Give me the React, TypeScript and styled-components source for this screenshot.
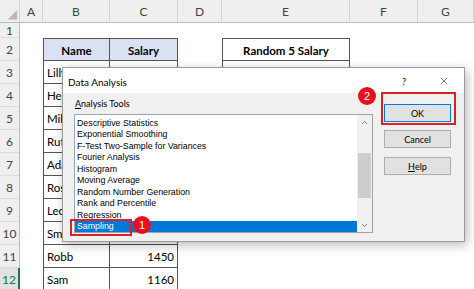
import React from 'react';
import styled, { createGlobalStyle } from 'styled-components';
import { X, ChevronUp, ChevronDown } from 'lucide-react';

const GlobalStyle = createGlobalStyle`
  html, body { margin: 0; padding: 0; background: #fff; overflow: hidden; }
  body { font-family: Lato, "Liberation Sans", sans-serif; }
`;

const COLS = ['A', 'B', 'C', 'D', 'E', 'F', 'G'];

interface SheetRow {
  n: number;
  name?: string;
  salary?: string;
  head?: boolean;
  eText?: string;
  eBox?: boolean;
}

const rows: SheetRow[] = [
  { n: 1 },
  { n: 2, name: 'Name', salary: 'Salary', head: true, eText: 'Random 5 Salary', eBox: true },
  { n: 3, name: 'Lilly', salary: '1200', eBox: true },
  { n: 4, name: 'Henry', salary: '1350', eBox: true },
  { n: 5, name: 'Mike', salary: '1100', eBox: true },
  { n: 6, name: 'Ruth', salary: '1500', eBox: true },
  { n: 7, name: 'Adam', salary: '1250', eBox: true },
  { n: 8, name: 'Ross', salary: '1300' },
  { n: 9, name: 'Leo', salary: '1400' },
  { n: 10, name: 'Smith', salary: '1050' },
  { n: 11, name: 'Robb', salary: '1450' },
  { n: 12, name: 'Sam', salary: '1160' },
];

const tools = [
  'Descriptive Statistics',
  'Exponential Smoothing',
  'F-Test Two-Sample for Variances',
  'Fourier Analysis',
  'Histogram',
  'Moving Average',
  'Random Number Generation',
  'Rank and Percentile',
  'Regression',
  'Sampling',
];

const App: React.FC = () => {
  return (
    <>
      <GlobalStyle />
      <Sheet>
        <Grid>
          <Corner>
            <svg width="20" height="23" viewBox="0 0 20 23">
              <polygon points="18,10 18,20 8,20" fill="#b8b8b8" />
            </svg>
          </Corner>
          {COLS.map((c) => (
            <ColHead key={c}>{c}</ColHead>
          ))}
          {rows.map((r) => (
            <React.Fragment key={r.n}>
              <RowHead $active={r.n === 12}>{r.n}</RowHead>
              <Cell />
              <Cell $boxed={r.n > 1} $left $top={r.n === 2} $head={r.head} $align={r.head ? 'center' : 'left'}>
                {r.name}
              </Cell>
              <Cell $boxed={r.n > 1} $top={r.n === 2} $head={r.head} $align={r.head ? 'center' : 'right'}>
                {r.salary}
              </Cell>
              <Cell />
              <Cell $boxed={r.eBox} $left $top={r.n === 2} $bold={r.n === 2} $align="center">
                {r.eText}
              </Cell>
              <Cell />
              <Cell />
            </React.Fragment>
          ))}
        </Grid>

        <Dialog>
          <TitleBar>
            <Title>Data Analysis</Title>
            <TitleButton>?</TitleButton>
            <TitleButton>
              <X size={12} strokeWidth={1.2} />
            </TitleButton>
          </TitleBar>
          <DialogBody>
            <ToolsColumn>
              <FieldLabel>
                <u>A</u>nalysis Tools
              </FieldLabel>
              <ListBox>
                <Items>
                  {tools.map((t) => (
                    <Item key={t} $selected={t === 'Sampling'}>
                      {t}
                    </Item>
                  ))}
                </Items>
                <ScrollBar>
                  <ScrollArrow>
                    <ChevronUp size={9} strokeWidth={2.2} />
                  </ScrollArrow>
                  <ScrollTrack>
                    <Thumb />
                  </ScrollTrack>
                  <ScrollArrow>
                    <ChevronDown size={9} strokeWidth={2.2} />
                  </ScrollArrow>
                </ScrollBar>
              </ListBox>
            </ToolsColumn>
            <ButtonColumn>
              <DialogButton $default>OK</DialogButton>
              <DialogButton>Cancel</DialogButton>
              <DialogButton $gap={9}>
                <u>H</u>elp
              </DialogButton>
            </ButtonColumn>
          </DialogBody>
        </Dialog>

        <Highlight $x={70} $y={219} $w={62} $h={17} />
        <Badge $x={133} $y={216}>1</Badge>
        <Highlight $x={381} $y={92} $w={75} $h={33} />
        <Badge $x={358} $y={87}>2</Badge>
      </Sheet>
    </>
  );
};

const Sheet = styled.div`
  position: relative;
  width: 474px;
  height: 289px;
  overflow: hidden;
  background: #fff;
`;

const Grid = styled.div`
  display: grid;
  grid-template-columns: 20px 23px 67px 68px 44px 128px 68px 56px;
  grid-template-rows: 23px 15px repeat(11, 23px);
`;

const Corner = styled.div`
  background: #efefef;
  border-bottom: 1px solid #bdbdbd;
  border-right: 1px solid #d4d4d4;
  box-sizing: border-box;
  display: flex;
`;

const ColHead = styled.div`
  box-sizing: border-box;
  background: #efefef;
  border-bottom: 1px solid #bdbdbd;
  border-right: 1px solid #d4d4d4;
  display: flex;
  align-items: center;
  justify-content: center;
  color: #444;
  font-size: 12px;
  padding-top: 1px;
`;

const RowHead = styled.div<{ $active?: boolean }>`
  box-sizing: border-box;
  background: ${(p) => (p.$active ? '#e1e1e1' : '#efefef')};
  border-bottom: 1px solid #dcdcdc;
  border-right: ${(p) => (p.$active ? '2px solid #217346' : '1px solid #bdbdbd')};
  display: flex;
  align-items: center;
  justify-content: center;
  color: ${(p) => (p.$active ? '#217346' : '#444')};
  font-size: 12px;
`;

const Cell = styled.div<{
  $boxed?: boolean;
  $left?: boolean;
  $top?: boolean;
  $head?: boolean;
  $bold?: boolean;
  $align?: 'left' | 'right' | 'center';
}>`
  box-sizing: border-box;
  display: flex;
  align-items: center;
  justify-content: ${(p) =>
    p.$align === 'right' ? 'flex-end' : p.$align === 'center' ? 'center' : 'flex-start'};
  padding: 1px 3px 0;
  font-size: 11.5px;
  color: #000;
  white-space: nowrap;
  overflow: hidden;
  background: ${(p) => (p.$head ? '#d9e1f2' : '#fff')};
  font-weight: ${(p) => (p.$head || p.$bold ? 700 : 400)};
  border-right: ${(p) => (p.$boxed ? '1px solid #555' : 'none')};
  border-bottom: ${(p) => (p.$boxed ? '1px solid #555' : 'none')};
  border-left: ${(p) => (p.$boxed && p.$left ? '1px solid #555' : 'none')};
  border-top: ${(p) => (p.$boxed && p.$top ? '1px solid #555' : 'none')};
`;

const Dialog = styled.div`
  position: absolute;
  left: 62px;
  top: 67px;
  width: 403px;
  height: 175px;
  box-sizing: border-box;
  border: 1px solid #9a9a9a;
  background: #f0f0f0;
  box-shadow: 2px 3px 10px rgba(0, 0, 0, 0.28);
  display: flex;
  flex-direction: column;
  font-family: Lato, "Liberation Sans", sans-serif;
  color: #000;
`;

const TitleBar = styled.div`
  height: 25px;
  background: #fff;
  display: flex;
  align-items: center;
  padding-left: 5px;
`;

const Title = styled.div`
  flex: 1;
  font-size: 10px;
  padding-top: 2px;
`;

const TitleButton = styled.div`
  width: 40px;
  height: 25px;
  display: flex;
  align-items: center;
  justify-content: center;
  font-size: 10px;
  color: #222;
`;

const DialogBody = styled.div`
  flex: 1;
  display: flex;
  gap: 11px;
  padding: 3px 12px 0 11px;
`;

const ToolsColumn = styled.div`
  display: flex;
  flex-direction: column;
  width: 299px;
`;

const FieldLabel = styled.div`
  font-size: 9px;
  line-height: 16px;
  height: 16px;
  margin-bottom: 2px;
  padding-left: 1px;
`;

const ListBox = styled.div`
  height: 119px;
  box-sizing: border-box;
  border: 1px solid #a0a4aa;
  background: #fff;
  display: flex;
`;

const Items = styled.div`
  flex: 1;
  padding-top: 2px;
`;

const Item = styled.div<{ $selected?: boolean }>`
  height: 12px;
  line-height: 12px;
  font-family: "Liberation Sans", Arial, sans-serif;
  font-size: 8.8px;
  padding-left: 2px;
  white-space: nowrap;
  overflow: hidden;
  background: ${(p) => (p.$selected ? '#0078d7' : 'transparent')};
  color: ${(p) => (p.$selected ? '#fff' : '#000')};
  &:nth-child(even) {
    height: 11px;
    line-height: 11px;
  }
`;

const ScrollBar = styled.div`
  width: 15px;
  background: #f0f0f0;
  display: flex;
  flex-direction: column;
`;

const ScrollArrow = styled.div`
  height: 14px;
  display: flex;
  align-items: center;
  justify-content: center;
  color: #606060;
`;

const ScrollTrack = styled.div`
  flex: 1;
  padding-top: 24px;
`;

const Thumb = styled.div`
  height: 45px;
  background: #cdcdcd;
  margin: 0 1px;
`;

const ButtonColumn = styled.div`
  width: 67px;
  display: flex;
  flex-direction: column;
  padding-top: 8px;
`;

const DialogButton = styled.div<{ $default?: boolean; $gap?: number }>`
  height: 18px;
  box-sizing: border-box;
  margin-bottom: ${(p) => (p.$default ? 8 : 0)}px;
  margin-top: ${(p) => p.$gap ?? 0}px;
  background: #e1e1e1;
  border: 1px solid ${(p) => (p.$default ? '#0078d7' : '#adadad')};
  display: flex;
  align-items: center;
  justify-content: center;
  font-size: 9px;
  color: #000;
`;

const Highlight = styled.div<{ $x: number; $y: number; $w: number; $h: number }>`
  position: absolute;
  left: ${(p) => p.$x}px;
  top: ${(p) => p.$y}px;
  width: ${(p) => p.$w}px;
  height: ${(p) => p.$h}px;
  box-sizing: border-box;
  border: 2px solid #dc2229;
`;

const Badge = styled.div<{ $x: number; $y: number }>`
  position: absolute;
  left: ${(p) => p.$x}px;
  top: ${(p) => p.$y}px;
  width: 18px;
  height: 18px;
  border-radius: 50%;
  background: #e8101c;
  color: #fff;
  font-size: 11px;
  display: flex;
  align-items: center;
  justify-content: center;
  font-family: "Liberation Sans", sans-serif;
`;

export default App;
